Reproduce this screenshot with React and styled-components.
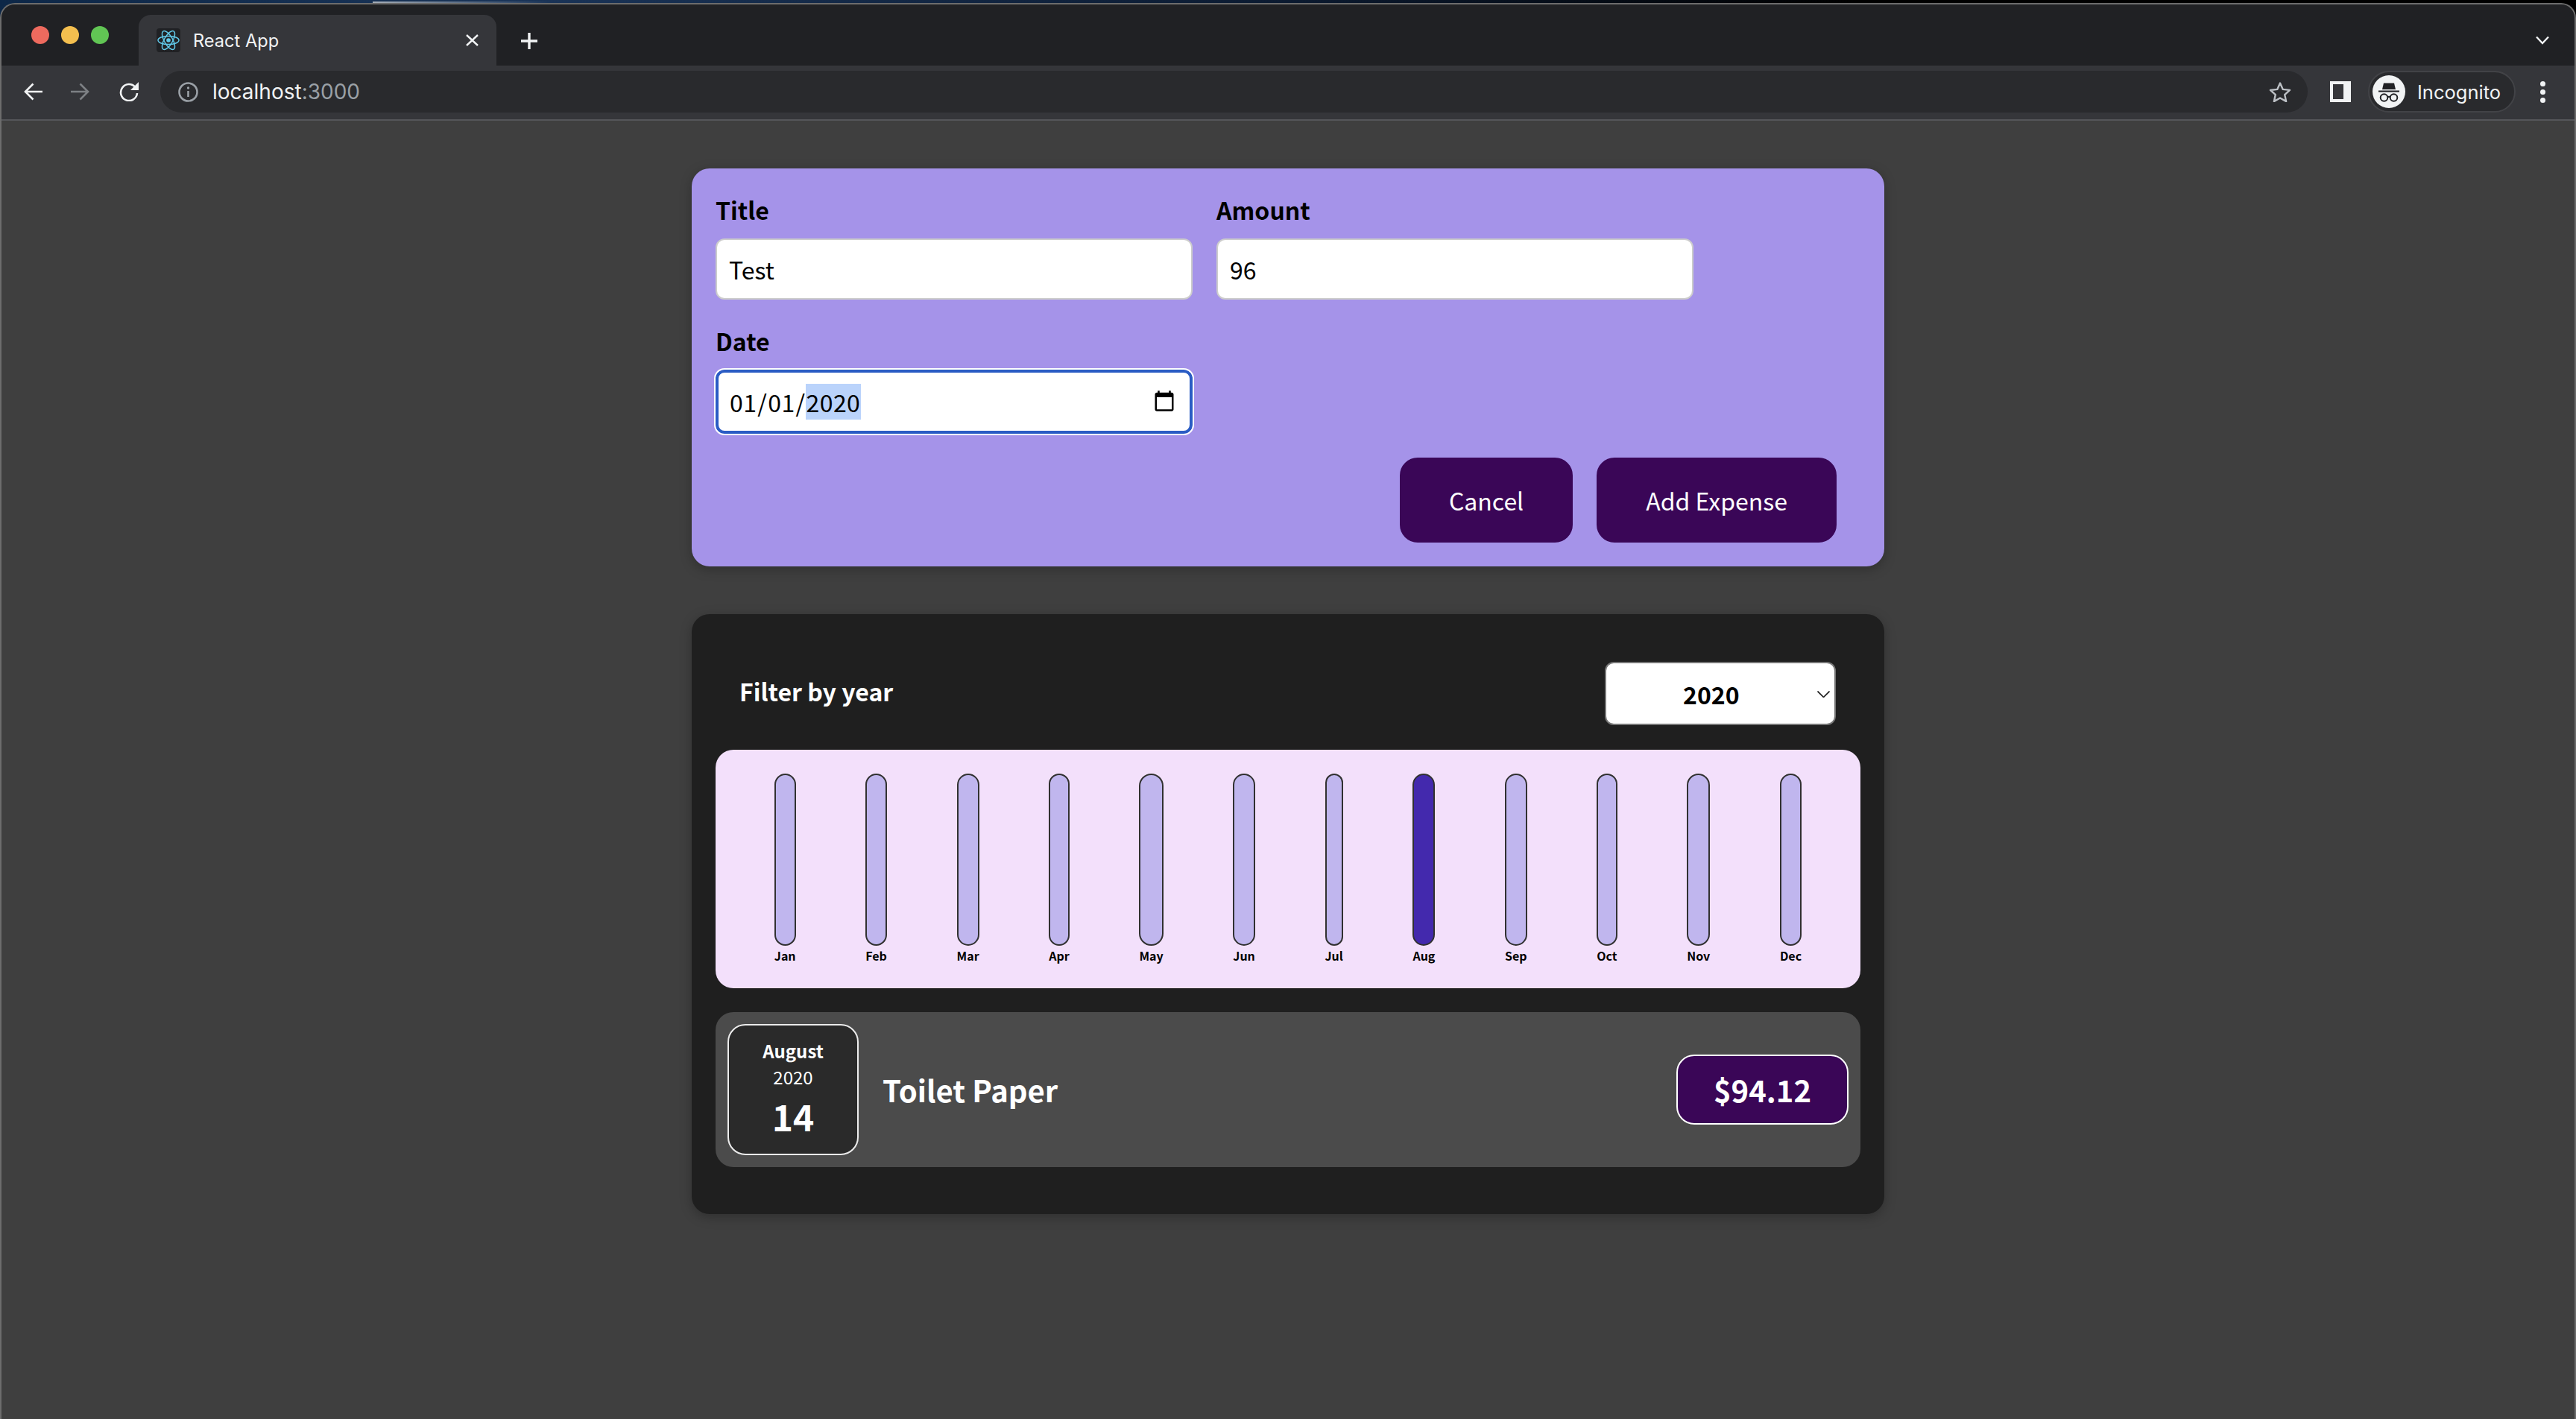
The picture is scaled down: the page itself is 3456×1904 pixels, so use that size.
import React from "react";
import styled, { createGlobalStyle } from "styled-components";

const GlobalStyle = createGlobalStyle`
  html, body {
    margin: 0;
    padding: 0;
    height: 100%;
    background: #000;
  }
  * {
    box-sizing: border-box;
  }
  body {
    font-family: "Noto Sans CJK JP", "Noto Sans", sans-serif;
  }
`;

const months = [
  "Jan", "Feb", "Mar", "Apr", "May", "Jun",
  "Jul", "Aug", "Sep", "Oct", "Nov", "Dec",
];

const ReactLogo = () => (
  <svg width="32" height="32" viewBox="0 0 32 32" fill="none">
    <rect width="32" height="32" rx="4" fill="#202124" />
    <g stroke="#61c8e8" strokeWidth="1.5">
      <ellipse cx="16" cy="16" rx="14" ry="5.6" />
      <ellipse cx="16" cy="16" rx="14" ry="5.6" transform="rotate(60 16 16)" />
      <ellipse cx="16" cy="16" rx="14" ry="5.6" transform="rotate(120 16 16)" />
    </g>
    <circle cx="16" cy="16" r="2.8" fill="#61c8e8" />
  </svg>
);

const ArrowIcon = ({ flip, color }) => (
  <svg
    width="26"
    height="24"
    viewBox="0 0 26 24"
    fill="none"
    stroke={color}
    strokeWidth="2.6"
    style={flip ? { transform: "scaleX(-1)" } : undefined}
  >
    <path d="M26 12H3M13.5 1.5 3 12l10.5 10.5" />
  </svg>
);

const ReloadIcon = () => (
  <svg width="28" height="26" viewBox="0 0 28 26" fill="none">
    <path d="M22.5 7A11 11 0 1 0 25 15" stroke="#f1f3f4" strokeWidth="2.6" />
    <path d="M27 0v11H16z" fill="#f1f3f4" />
  </svg>
);

const InfoIcon = () => (
  <svg width="27" height="27" viewBox="0 0 27 27" fill="none">
    <circle cx="13.5" cy="13.5" r="12" stroke="#9aa0a6" strokeWidth="2.6" />
    <path d="M13.5 12v8" stroke="#9aa0a6" strokeWidth="2.6" />
    <circle cx="13.5" cy="8" r="1.7" fill="#9aa0a6" />
  </svg>
);

const StarIcon = () => (
  <svg width="30" height="28" viewBox="0 0 30 28" fill="none">
    <path
      d="M15 2.5l3.8 8.4 9.2 1-6.8 6.2 1.9 9-8.1-4.6-8.1 4.6 1.9-9L2 11.900l9.200-1z"
      stroke="#bdc1c6"
      strokeWidth="2.4"
      strokeLinejoin="round"
    />
  </svg>
);

const PanelIcon = () => (
  <svg width="28" height="28" viewBox="0 0 28 28">
    <path d="M0 0h28v28H0zM4 4v20h14V4z" fill="#f1f3f4" fillRule="evenodd" />
  </svg>
);

const IncognitoIcon = () => (
  <svg width="44" height="44" viewBox="0 0 44 44" fill="none">
    <circle cx="22" cy="22" r="22" fill="#f1f3f4" />
    <path d="M15 10.500h14l2 8.500H13z" fill="#202124" />
    <path d="M8 21.500h28" stroke="#202124" strokeWidth="2" />
    <circle cx="15.500" cy="30" r="4.800" stroke="#202124" strokeWidth="2" />
    <circle cx="28.500" cy="30" r="4.800" stroke="#202124" strokeWidth="2" />
    <path d="M20 29.500q2-1.500 4 0" stroke="#202124" strokeWidth="2" />
  </svg>
);

const App = () => {
  return (
    <Desktop>
      <GlobalStyle />
      <BrowserWindow>
        <TabStrip>
          <TrafficLights>
            <Light $color="#ed6a5e" />
            <Light $color="#f4bf4f" />
            <Light $color="#61c554" />
          </TrafficLights>
          <Tab>
            <ReactLogo />
            <TabTitle>React App</TabTitle>
            <svg width="17" height="16" viewBox="0 0 17 16" stroke="#f1f3f4" strokeWidth="2.4">
              <path d="M1 1l15 14M16 1 1 15" />
            </svg>
          </Tab>
          <NewTab>
            <svg width="24" height="24" viewBox="0 0 24 24" stroke="#f1f3f4" strokeWidth="3.4">
              <path d="M12 1v22M1 12h22" />
            </svg>
          </NewTab>
          <TabListToggle>
            <svg width="18" height="12" viewBox="0 0 18 12" fill="none" stroke="#f1f3f4" strokeWidth="2.4">
              <path d="M1 1.500l8 8.500 8-8.500" />
            </svg>
          </TabListToggle>
        </TabStrip>

        <Toolbar>
          <NavIcons>
            <ArrowIcon color="#f1f3f4" />
            <ArrowIcon flip color="#7d8084" />
            <ReloadIcon />
          </NavIcons>
          <Omnibox>
            <InfoIcon />
            <Url>
              localhost<UrlPort>:3000</UrlPort>
            </Url>
            <OmniboxEnd>
              <StarIcon />
            </OmniboxEnd>
          </Omnibox>
          <PanelSlot>
            <PanelIcon />
          </PanelSlot>
          <ProfileChip>
            <IncognitoIcon />
            <ProfileName>Incognito</ProfileName>
          </ProfileChip>
          <MenuDots>
            <i />
            <i />
            <i />
          </MenuDots>
        </Toolbar>

        <Page>
          <NewExpense>
            <Controls>
              <Control>
                <FieldLabel htmlFor="title">Title</FieldLabel>
                <TextInput id="title" type="text" defaultValue="Test" />
              </Control>
              <Control>
                <FieldLabel htmlFor="amount">Amount</FieldLabel>
                <TextInput id="amount" type="number" defaultValue="96" />
              </Control>
              <Control>
                <FieldLabel htmlFor="date">Date</FieldLabel>
                <DateInput id="date" type="date" defaultValue="2020-01-01" />
              </Control>
            </Controls>
            <Actions>
              <ActionButton type="button">Cancel</ActionButton>
              <ActionButton type="submit">Add Expense</ActionButton>
            </Actions>
          </NewExpense>

          <Expenses>
            <FilterRow>
              <FilterLabel>Filter by year</FilterLabel>
              <SelectWrap>
                <YearSelect defaultValue="2020">
                  <option value="2022">2022</option>
                  <option value="2021">2021</option>
                  <option value="2020">2020</option>
                  <option value="2019">2019</option>
                </YearSelect>
                <SelectArrow width="17" height="9" viewBox="0 0 17 9" fill="none" stroke="#1a1a1a" strokeWidth="1.6">
                  <path d="M.5.5l8 8 8-8" />
                </SelectArrow>
              </SelectWrap>
            </FilterRow>

            <Chart>
              {months.map((month) => (
                <ChartBar key={month}>
                  <BarTrack $active={month === "Aug"} />
                  <BarLabel>{month}</BarLabel>
                </ChartBar>
              ))}
            </Chart>

            <ExpenseItem>
              <DateBox>
                <DateMonth>August</DateMonth>
                <DateYear>2020</DateYear>
                <DateDay>14</DateDay>
              </DateBox>
              <ExpenseTitle>Toilet Paper</ExpenseTitle>
              <ExpensePrice>$94.12</ExpensePrice>
            </ExpenseItem>
          </Expenses>
        </Page>
      </BrowserWindow>
    </Desktop>
  );
};

export default App;

const Desktop = styled.div`
  height: 100vh;
  padding-top: 4px;
  overflow: hidden;
  background:
    linear-gradient(90deg, #a4acb6, rgba(164, 172, 182, 0)) 500px 2px / 240px 2px no-repeat,
    linear-gradient(90deg, #0d2747 0%, #1a3458 20%, #0b1a30 50%, #000 72%);
`;

const BrowserWindow = styled.div`
  display: flex;
  flex-direction: column;
  height: 100%;
  border: 2px solid #6c6c6c;
  border-bottom: 0;
  border-radius: 20px 20px 0 0;
  overflow: hidden;
  background: #3f3f3f;
`;

const TabStrip = styled.div`
  display: flex;
  align-items: flex-end;
  flex: none;
  height: 82px;
  background: #202124;
  color: #f1f3f4;
`;

const TrafficLights = styled.div`
  display: flex;
  align-self: flex-start;
  gap: 16px;
  width: 184px;
  padding: 29px 0 0 40px;
`;

const Light = styled.span`
  width: 24px;
  height: 24px;
  border-radius: 50%;
  background: ${(props) => props.$color};
`;

const Tab = styled.div`
  display: flex;
  align-items: center;
  width: 480px;
  height: 68px;
  padding: 0 24px;
  border-radius: 16px 16px 0 0;
  background: #35363a;
`;

const TabTitle = styled.span`
  flex: 1;
  margin-left: 17px;
  font-family: Inter, sans-serif;
  font-size: 23.6px;
  color: #f1f3f4;
`;

const NewTab = styled.div`
  display: flex;
  align-self: flex-start;
  margin: 37px 0 0 32px;
`;

const TabListToggle = styled.div`
  display: flex;
  align-self: flex-start;
  margin: 42px 0 0 auto;
  padding-right: 34px;
`;

const Toolbar = styled.div`
  display: flex;
  align-items: center;
  flex: none;
  height: 74px;
  padding-bottom: 2px;
  border-bottom: 2px solid #55565a;
  background: #35363a;
`;

const NavIcons = styled.div`
  display: flex;
  align-items: center;
  gap: 38px;
  width: 213px;
  padding-left: 29px;
`;

const Omnibox = styled.div`
  display: flex;
  align-items: center;
  flex: 1;
  height: 56px;
  padding: 0 22px 0 24px;
  border-radius: 28px;
  background: #292a2d;
`;

const Url = styled.span`
  margin-left: 19px;
  font-family: Inter, sans-serif;
  font-size: 28px;
  color: #f1f3f4;
`;

const UrlPort = styled.span`
  color: #9aa0a6;
`;

const OmniboxEnd = styled.div`
  display: flex;
  margin-left: auto;
`;

const PanelSlot = styled.div`
  display: flex;
  margin: 0 23px 0 30px;
`;

const ProfileChip = styled.div`
  display: flex;
  align-items: center;
  width: 198px;
  height: 56px;
  padding-left: 4px;
  border: 2px solid #424347;
  border-radius: 28px;
  background: #292a2d;
`;

const ProfileName = styled.span`
  margin-left: 16px;
  font-family: Inter, sans-serif;
  font-size: 25.5px;
  color: #f1f3f4;
`;

const MenuDots = styled.div`
  display: flex;
  flex-direction: column;
  align-items: center;
  gap: 4px;
  margin: 0 39px 0 33px;

  i {
    width: 7px;
    height: 7px;
    border-radius: 50%;
    background: #f1f3f4;
  }
`;

const Page = styled.main`
  flex: 1;
  padding-top: 64px;
  background: #3f3f3f;
`;

const NewExpense = styled.form`
  width: 1600px;
  margin: 0 auto 64px;
  padding: 32px;
  border-radius: 24px;
  background: #a593e9;
  box-shadow: 0 4px 16px rgba(0, 0, 0, 0.25);
`;

const Controls = styled.div`
  display: flex;
  flex-wrap: wrap;
  gap: 32px;
  margin-bottom: 32px;
`;

const Control = styled.div`
  display: flex;
  flex-direction: column;
`;

const FieldLabel = styled.label`
  margin-bottom: 16px;
  font-size: 32px;
  font-weight: 700;
  color: #000;
`;

const TextInput = styled.input`
  width: 640px;
  padding: 16px;
  border: 2px solid #ccc;
  border-radius: 12px;
  background: #fff;
  font: inherit;
  font-size: 32px;
  color: #000;
  appearance: textfield;
  outline: none;
`;

const DateInput = styled(TextInput)`
  height: 86px;
  border: 4px solid #2a5cc4;
  padding: 0 16px 0 14px;
  outline: 2px solid #fff;
  outline-offset: 0;
  letter-spacing: 0.4px;

  &::-webkit-datetime-edit {
    padding: 0;
  }
  &::-webkit-datetime-edit-year-field {
    background: #bad3fb;
    color: #000;
  }
`;

const Actions = styled.div`
  display: flex;
  justify-content: flex-end;
  gap: 32px;
  padding-right: 32px;
`;

const ActionButton = styled.button`
  padding: 32px 64px;
  border: 2px solid #3a0657;
  border-radius: 24px;
  background: #3a0657;
  font: inherit;
  font-size: 32px;
  color: #fff;
`;

const Expenses = styled.section`
  width: 1600px;
  margin: 0 auto;
  padding: 32px 32px 63px;
  border-radius: 24px;
  background: #1f1f1f;
  box-shadow: 0 4px 16px rgba(0, 0, 0, 0.25);
`;

const FilterRow = styled.div`
  display: flex;
  align-items: center;
  justify-content: space-between;
  margin: 0 0 33px;
  padding: 32px 33px 0 32px;
`;

const FilterLabel = styled.label`
  margin-bottom: 8px;
  font-size: 32px;
  font-weight: 700;
  color: #fff;
`;

const SelectWrap = styled.div`
  position: relative;
  display: flex;
`;

const YearSelect = styled.select`
  width: 310px;
  height: 85px;
  padding: 0 0 0 103px;
  border: 2px solid #767676;
  border-radius: 12px;
  background: #fff;
  font: inherit;
  font-size: 32px;
  font-weight: 700;
  color: #000;
  appearance: none;
`;

const SelectArrow = styled.svg`
  position: absolute;
  top: 39px;
  right: 8px;
  pointer-events: none;
`;

const Chart = styled.div`
  display: flex;
  justify-content: space-around;
  height: 320px;
  margin-bottom: 32px;
  padding: 32px;
  border-radius: 24px;
  background: #f3e0fb;
`;

const ChartBar = styled.div`
  display: flex;
  flex-direction: column;
  align-items: stretch;
  height: 100%;
`;

const BarTrack = styled.div`
  flex: 1;
  border: 2px solid #313131;
  border-radius: 24px;
  background: ${(props) => (props.$active ? "#4329ad" : "#c0b6ee")};
`;

const BarLabel = styled.div`
  margin-top: 1px;
  font-size: 16px;
  font-weight: 700;
  text-align: center;
  color: #000;
`;

const ExpenseItem = styled.div`
  display: flex;
  align-items: center;
  padding: 16px;
  border-radius: 24px;
  background: #4b4b4b;
`;

const DateBox = styled.div`
  display: flex;
  flex-direction: column;
  align-items: center;
  justify-content: center;
  flex: none;
  width: 176px;
  height: 176px;
  border: 2px solid #ececec;
  border-radius: 24px;
  background: #2a2a2a;
  color: #fff;
`;

const DateMonth = styled.div`
  font-size: 24px;
  font-weight: 700;
`;

const DateYear = styled.div`
  font-size: 24px;
`;

const DateDay = styled.div`
  font-size: 48px;
  font-weight: 700;
`;

const ExpenseTitle = styled.h2`
  flex: 1;
  margin: 0 32px;
  font-size: 40px;
  font-weight: 700;
  color: #fff;
`;

const ExpensePrice = styled.div`
  padding: 16px 48px;
  border: 2px solid #fff;
  border-radius: 24px;
  background: #3a0657;
  font-size: 40px;
  font-weight: 700;
  color: #fff;
`;
